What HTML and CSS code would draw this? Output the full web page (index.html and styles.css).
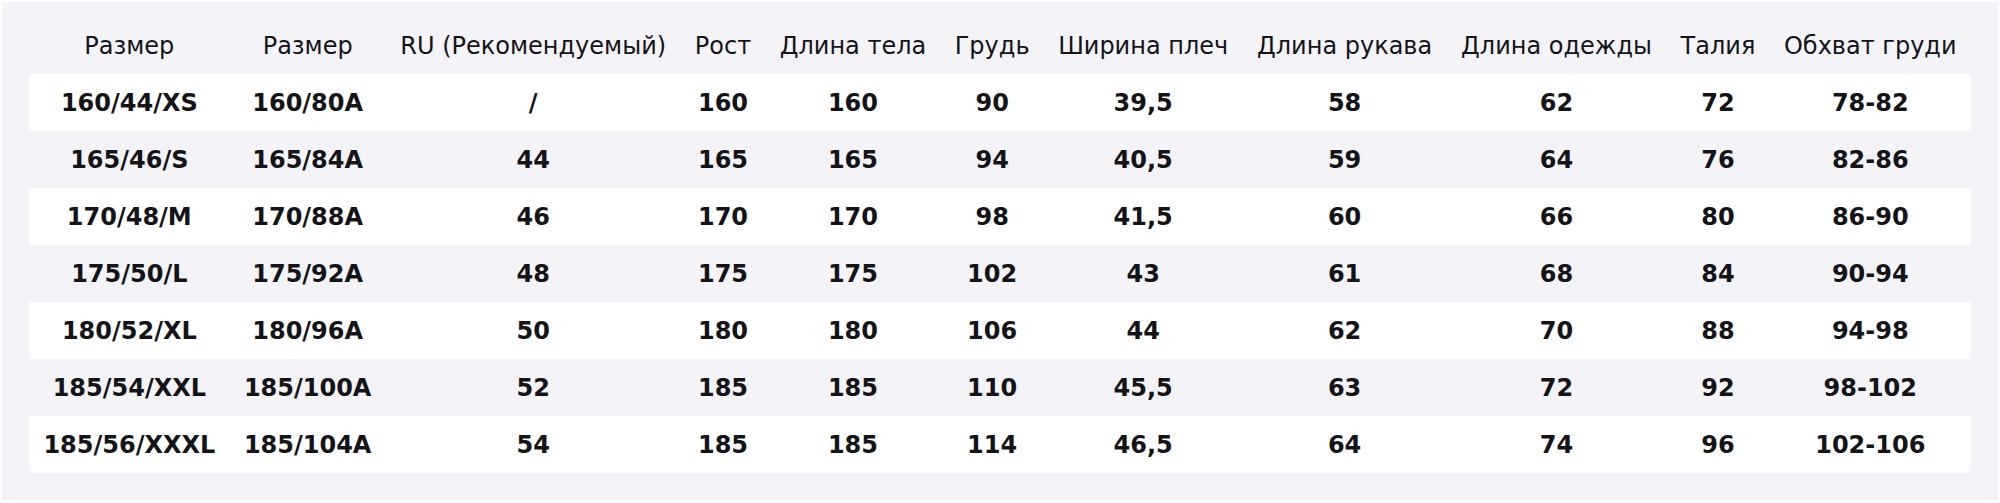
FILE: index.html
```html
<!DOCTYPE html>
<html lang="ru">
<head>
<meta charset="utf-8">
<link rel="stylesheet" href="styles.css">
</head>
<body>
<div class="sheet">
  <table class="sizes">
    <thead>
      <tr>
        <th>Размер</th><th>Размер</th><th>RU (Рекомендуемый)</th><th>Рост</th><th>Длина тела</th><th>Грудь</th><th>Ширина плеч</th><th>Длина рукава</th><th>Длина одежды</th><th>Талия</th><th>Обхват груди</th>
      </tr>
    </thead>
    <tbody>
      <tr><td>160/44/XS</td><td>160/80A</td><td>/</td><td>160</td><td>160</td><td>90</td><td>39,5</td><td>58</td><td>62</td><td>72</td><td>78-82</td></tr>
      <tr><td>165/46/S</td><td>165/84A</td><td>44</td><td>165</td><td>165</td><td>94</td><td>40,5</td><td>59</td><td>64</td><td>76</td><td>82-86</td></tr>
      <tr><td>170/48/M</td><td>170/88A</td><td>46</td><td>170</td><td>170</td><td>98</td><td>41,5</td><td>60</td><td>66</td><td>80</td><td>86-90</td></tr>
      <tr><td>175/50/L</td><td>175/92A</td><td>48</td><td>175</td><td>175</td><td>102</td><td>43</td><td>61</td><td>68</td><td>84</td><td>90-94</td></tr>
      <tr><td>180/52/XL</td><td>180/96A</td><td>50</td><td>180</td><td>180</td><td>106</td><td>44</td><td>62</td><td>70</td><td>88</td><td>94-98</td></tr>
      <tr><td>185/54/XXL</td><td>185/100A</td><td>52</td><td>185</td><td>185</td><td>110</td><td>45,5</td><td>63</td><td>72</td><td>92</td><td>98-102</td></tr>
      <tr><td>185/56/XXXL</td><td>185/104A</td><td>54</td><td>185</td><td>185</td><td>114</td><td>46,5</td><td>64</td><td>74</td><td>96</td><td>102-106</td></tr>
    </tbody>
  </table>
</div>
</body>
</html>
```
FILE: styles.css
```css
html, body {
  background: #ffffff;
}
body {
  margin: 2px;
  font-family: "DejaVu Sans", "Noto Sans", sans-serif;
  color: #141418;
}
.sheet {
  background: #f3f3f8;
  padding: 15px 27px 27px;
}
.sizes {
  width: 100%;
  border-collapse: collapse;
  border-spacing: 0;
}
.sizes th,
.sizes td {
  text-align: center;
  font-size: 24px;
  line-height: 28px;
  padding: 14.5px 14px;
  white-space: nowrap;
}
.sizes th {
  font-weight: normal;
}
.sizes td {
  font-weight: bold;
}
.sizes tbody tr:nth-child(odd) {
  background: #ffffff;
}
```
